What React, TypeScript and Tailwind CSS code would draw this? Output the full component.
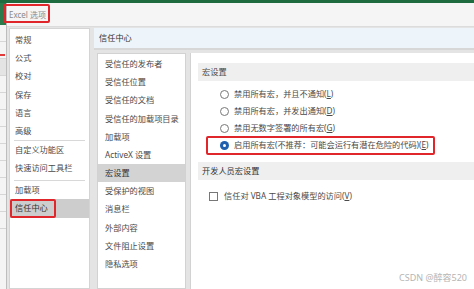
const leftTop = ['常规', '公式', '校对', '保存', '语言', '高级'];
const leftMid = ['自定义功能区', '快速访问工具栏'];
const midItems = [
  '受信任的发布者',
  '受信任位置',
  '受信任的文档',
  '受信任的加载项目录',
  '加载项',
  'ActiveX 设置',
  '宏设置',
  '受保护的视图',
  '消息栏',
  '外部内容',
  '文件阻止设置',
  '隐私选项',
];

const Radio = ({ checked }: { checked?: boolean }) =>
  checked ? (
    <span className="w-[9px] h-[9px] rounded-full bg-[#1f5fae] flex items-center justify-center shrink-0">
      <span className="w-[3px] h-[3px] rounded-full bg-white" />
    </span>
  ) : (
    <span className="w-[9px] h-[9px] rounded-full border border-[#777] bg-white shrink-0" />
  );

const Key = ({ k }: { k: string }) => (
  <>
    (<span className="underline">{k}</span>)
  </>
);

export default function App() {
  return (
    <div className="w-[474px] h-[289px] overflow-hidden relative bg-[#e6e6e6] font-['Noto_Sans','Noto_Sans_CJK_SC',sans-serif] text-[8.2px] text-[#4a4a4a] flex flex-col">
      {/* excel ribbon edge */}
      <div className="h-[3px] bg-[#1e6b3f] shrink-0" />
      <div className="flex flex-1 min-h-0">
        {/* sheet behind the dialog */}
        <div className="w-[7px] shrink-0 flex flex-col bg-[#f4f4f4] border-r border-[#bdbdbd]">
          <div className="h-[22px] bg-[#2a7a4b]" />
          <div className="h-[17px] border-b border-[#d6d6d6]" />
          <div className="h-[17px] border-b border-[#d6d6d6] relative">
            <span className="absolute left-0 bottom-[2px] w-[5px] h-[2px] bg-[#e23b3b]" />
          </div>
          <div className="h-[17px] border-b border-[#d6d6d6] bg-[#e4e4e4]" />
          <div className="h-[17px] border-b border-[#d6d6d6]" />
          <div className="h-[17px] border-b border-[#d6d6d6]" />
          <div className="h-[17px] border-b border-[#d6d6d6]" />
          <div className="h-[17px] border-b border-[#d6d6d6]" />
          <div className="h-[17px] border-b border-[#d6d6d6]" />
          <div className="h-[17px] border-b border-[#d6d6d6]" />
          <div className="h-[17px] border-b border-[#d6d6d6]" />
          <div className="h-[17px] border-b border-[#d6d6d6]" />
          <div className="h-[17px] border-b border-[#d6d6d6]" />
        </div>

        {/* dialog */}
        <div className="flex-1 flex flex-col min-w-0">
          <div className="h-[24px] shrink-0 bg-[#f5f5f5] border-b border-[#dcdcdc] flex items-center pl-[2px] text-[8px] text-[#8a8a8a]">
            Excel 选项
          </div>

          <div className="flex flex-1 min-h-0 bg-[#e4e4e4]">
            {/* left nav */}
            <div className="w-[81px] ml-[2px] mt-[1px] bg-white border border-[#d4d4d4] pt-[2px] shrink-0">
              {leftTop.map((t) => (
                <div key={t} className="h-[18.2px] flex items-center pl-[5px]">{t}</div>
              ))}
              <div className="mx-[4px] border-t border-[#d8d8d8]" />
              {leftMid.map((t) => (
                <div key={t} className="h-[18.2px] flex items-center pl-[5px]">{t}</div>
              ))}
              <div className="mx-[4px] mt-[2px] border-t border-[#d8d8d8]" />
              <div className="h-[18.5px] flex items-center pl-[5px]">加载项</div>
              <div className="h-[18.5px] flex items-center pl-[5px] bg-[#cdcdcd] relative text-[#333]">
                信任中心
                <span className="absolute left-[0px] top-0 w-[46px] h-[19px] border-2 border-[#e0262b] rounded-[2px]" />
              </div>
            </div>

            {/* right side */}
            <div className="flex-1 flex flex-col ml-[4px] mt-[1px] min-w-0">
              <div className="h-[22px] shrink-0 bg-[#edf4fa] border-b-2 border-[#d7d7d7] flex items-center pl-[5px] text-[#333]">
                信任中心
              </div>
              <div className="flex flex-1 min-h-0 pt-[3px] pl-[3px]">
                {/* trust center nav */}
                <div className="w-[89px] shrink-0 bg-white border border-[#d2d2d2] pt-[1px]">
                  {midItems.map((t) => (
                    <div
                      key={t}
                      className={
                        t === '宏设置'
                          ? 'h-[18.2px] flex items-center pl-[7px] bg-[#d3d3d3] text-[#333]'
                          : 'h-[18.2px] flex items-center pl-[7px] whitespace-nowrap'
                      }
                    >
                      {t}
                    </div>
                  ))}
                </div>

                {/* content */}
                <div className="flex-1 ml-[4px] bg-white border-l border-[#d2d2d2] pt-[10px] pl-[7px] relative">
                  <div className="h-[18px] bg-[#efefef] flex items-center pl-[4px]">宏设置</div>
                  <div className="mt-[5px] flex flex-col">
                    <div className="h-[17px] flex items-center gap-[5px] pl-[22px]">
                      <Radio />
                      <span>禁用所有宏，并且不通知<Key k="L" /></span>
                    </div>
                    <div className="h-[17px] flex items-center gap-[5px] pl-[22px]">
                      <Radio />
                      <span>禁用所有宏，并发出通知<Key k="D" /></span>
                    </div>
                    <div className="h-[17px] flex items-center gap-[5px] pl-[22px]">
                      <Radio />
                      <span>禁用无数字签署的所有宏<Key k="G" /></span>
                    </div>
                    <div className="h-[17px] flex items-center gap-[5px] pl-[22px] relative whitespace-nowrap">
                      <Radio checked />
                      <span>启用所有宏(不推荐：可能会运行有潜在危险的代码)<Key k="E" /></span>
                      <span className="absolute left-[8px] top-[-1px] w-[229px] h-[19px] border-2 border-[#e0262b] rounded-[2px]" />
                    </div>
                  </div>
                  <div className="mt-[8px] h-[18px] bg-[#efefef] flex items-center pl-[4px] text-[#333]">开发人员宏设置</div>
                  <div className="mt-[8px] h-[17px] flex items-center gap-[6px] pl-[11px]">
                    <span className="w-[9px] h-[9px] border border-[#777] bg-white shrink-0" />
                    <span>信任对 VBA 工程对象模型的访问<Key k="V" /></span>
                  </div>
                  <div className="absolute right-[7px] bottom-[5px] text-[9px] text-[#b5b5b5]">CSDN @醉容520</div>
                </div>
              </div>
            </div>
          </div>
        </div>
      </div>
      <span className="absolute left-[3px] top-[4px] w-[47px] h-[19px] border-2 border-[#e0262b] rounded-[2px]" />
    </div>
  );
}
